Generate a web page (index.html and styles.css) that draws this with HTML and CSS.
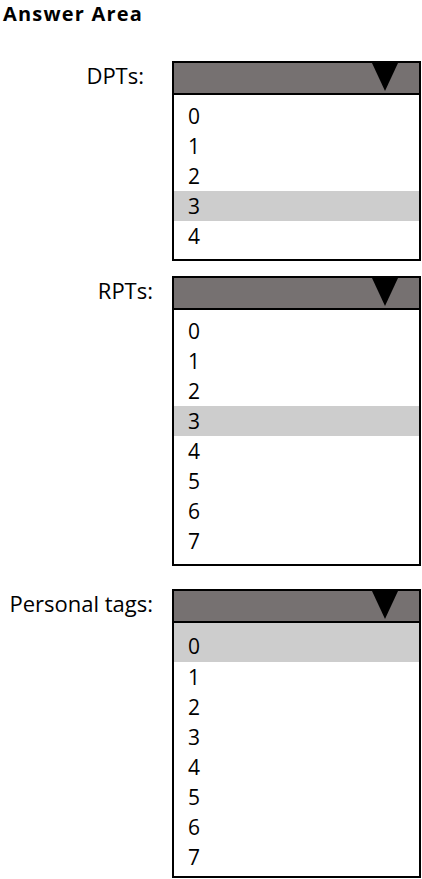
FILE: index.html
```html
<!DOCTYPE html>
<html lang="en">
<head>
    <meta charset="UTF-8">
    <meta name="viewport" content="width=device-width, initial-scale=1.0">
    <title>Answer Area</title>
    <link rel="stylesheet" href="styles.css">
</head>
<body>
    <h1 class="title">Answer Area</h1>

    <div class="answers">
        <!-- DPTs -->
        <div class="answer-row">
            <div class="label label-short">DPTs:</div>
            <div class="dropdown">
                <div class="dropdown-head">
                    <svg class="arrow" width="26" height="28" viewBox="0 0 26 28"><polygon points="0,0 26,0 13,28" fill="#000"/></svg>
                </div>
                <ul class="options">
                    <li>0</li>
                    <li>1</li>
                    <li>2</li>
                    <li class="selected">3</li>
                    <li>4</li>
                </ul>
            </div>
        </div>

        <!-- RPTs -->
        <div class="answer-row">
            <div class="label">RPTs:</div>
            <div class="dropdown">
                <div class="dropdown-head">
                    <svg class="arrow" width="26" height="28" viewBox="0 0 26 28"><polygon points="0,0 26,0 13,28" fill="#000"/></svg>
                </div>
                <ul class="options">
                    <li>0</li>
                    <li>1</li>
                    <li>2</li>
                    <li class="selected">3</li>
                    <li>4</li>
                    <li>5</li>
                    <li>6</li>
                    <li>7</li>
                </ul>
            </div>
        </div>

        <!-- Personal tags -->
        <div class="answer-row answer-row-last">
            <div class="label">Personal tags:</div>
            <div class="dropdown">
                <div class="dropdown-head">
                    <svg class="arrow" width="26" height="28" viewBox="0 0 26 28"><polygon points="0,0 26,0 13,28" fill="#000"/></svg>
                </div>
                <ul class="options options-first">
                    <li class="selected">0</li>
                    <li>1</li>
                    <li>2</li>
                    <li>3</li>
                    <li>4</li>
                    <li>5</li>
                    <li>6</li>
                    <li>7</li>
                </ul>
            </div>
        </div>
    </div>
</body>
</html>
```

FILE: styles.css
```css
* {
    margin: 0;
    padding: 0;
    box-sizing: border-box;
}

body {
    font-family: "Open Sans", "Liberation Sans", Arial, sans-serif;
    color: #000;
    background: #fff;
}

.title {
    font-size: 20px;
    line-height: 28px;
    font-weight: 700;
    letter-spacing: 1.2px;
    padding-left: 3px;
}

.answers {
    display: flex;
    flex-direction: column;
    gap: 15px;
    margin-top: 33px;
}

.answer-row {
    display: grid;
    grid-template-columns: 172px 249px;
}

.answer-row-last {
    margin-top: 8px;
}

.label {
    font-size: 22px;
    line-height: 28px;
    text-align: right;
    padding-right: 19px;
}

.label-short {
    padding-right: 28px;
}

/* Dropdown box */
.dropdown {
    border: 2px solid #000;
}

.dropdown-head {
    display: flex;
    justify-content: flex-end;
    align-items: flex-start;
    height: 32px;
    padding-right: 21px;
    background: #767171;
    border-bottom: 2px solid #000;
}

.arrow {
    display: block;
}

.options {
    list-style: none;
    padding: 6px 0 8px;
}

.options li {
    height: 30px;
    font-size: 21px;
    line-height: 30px;
    padding-left: 14px;
}

.options .selected {
    background: #cdcdcd;
}

.options-first {
    padding: 0 0 4px;
}

.options-first li:first-child {
    height: 39px;
    padding-top: 8px;
}
```
